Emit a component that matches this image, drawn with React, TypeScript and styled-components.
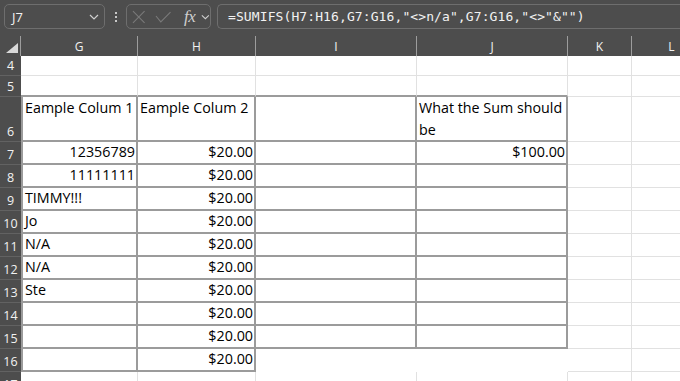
import React from 'react';
import styled, { createGlobalStyle } from 'styled-components';

type Edge = 'thick' | 'grid' | 'none';
type Align = 'left' | 'right';

type CellData = {
	text: string;
	align?: Align;
	top?: boolean;
};

const COLS = ['G', 'H', 'I', 'J', 'K', 'L'];
const COL_WIDTHS = [117, 118, 161, 151, 64, 80];
const ROWS = [4, 5, 6, 7, 8, 9, 10, 11, 12, 13, 14, 15, 16, 17];
const ROW_HEIGHTS: Record<number, number> = { 4: 20, 5: 21, 6: 45 };

const FORMULA = '=SUMIFS(H7:H16,G7:G16,"<>n/a",G7:G16,"<>"&"")';

const CELLS: Record<string, CellData> = {
	G6: { text: 'Eample Colum 1', top: true },
	H6: { text: 'Eample Colum 2', top: true },
	J6: { text: 'What the Sum should be', top: true },
	G7: { text: '12356789', align: 'right' },
	G8: { text: '11111111', align: 'right' },
	G9: { text: 'TIMMY!!!' },
	G10: { text: 'Jo' },
	G11: { text: 'N/A' },
	G12: { text: 'N/A' },
	G13: { text: 'Ste' },
	J7: { text: '$100.00', align: 'right' },
};

// money column
for (let r = 7; r <= 16; r++) {
	CELLS[`H${r}`] = { text: '$20.00', align: 'right' };
}

const colIndex = (c: string) => COLS.indexOf(c);

const isBordered = (r: number, c: number) => {
	const col = COLS[c];
	if ((col === 'G' || col === 'H') && r >= 6 && r <= 16) return true;
	if ((col === 'I' || col === 'J') && r >= 6 && r <= 15) return true;
	return false;
};

// white fill hides the gridlines round these cells
const isFilled = (r: number, c: number) => {
	const col = COLS[c];
	return (col === 'I' || col === 'J') && r === 16;
};

const rightEdge = (r: number, c: number): Edge => {
	if (isBordered(r, c) || isBordered(r, c + 1)) return 'thick';
	if (isFilled(r, c) || isFilled(r, c + 1)) return 'none';
	return 'grid';
};

const bottomEdge = (r: number, c: number): Edge => {
	if (isBordered(r, c) || isBordered(r + 1, c)) return 'thick';
	if (isFilled(r, c) || isFilled(r + 1, c)) return 'none';
	return 'grid';
};

const edgeCss = (edge: Edge) => {
	if (edge === 'thick') return '2px solid #9b9b9b';
	if (edge === 'grid') return '1px solid #e1e1e1';
	return '1px solid transparent';
};

const GlobalStyle = createGlobalStyle`
	html, body {
		margin: 0;
		padding: 0;
		background: #ffffff;
	}

	body {
		overflow: hidden;
	}
`;

const Window = styled.div`
	width: 680px;
	height: 381px;
	overflow: hidden;
	background: #ffffff;
	display: flex;
	flex-direction: column;
`;

const Toolbar = styled.div`
	height: 36px;
	flex: none;
	box-sizing: border-box;
	padding: 4px 0 0 4px;
	background: #4d4d4d;
	display: flex;
	align-items: flex-start;
`;

const Box = styled.div`
	height: 25px;
	box-sizing: border-box;
	border: 1px solid #6e6e6e;
	border-radius: 5px;
	display: flex;
	align-items: center;
`;

const NameBox = styled(Box)`
	width: 101px;
	justify-content: space-between;
	padding: 0 5px 0 7px;
	color: #f2f2f2;
	font: 13px 'Open Sans', sans-serif;
`;

const Dots = styled.div`
	height: 25px;
	margin-left: 10px;
	display: flex;
	flex-direction: column;
	justify-content: center;
	gap: 2px;

	span {
		width: 2px;
		height: 2px;
		background: #c8c8c8;
	}
`;

const FxGroup = styled(Box)`
	width: 85px;
	margin-left: 9px;
	padding-left: 5px;
	gap: 9px;
`;

const Fx = styled.span`
	margin-left: 4px;
	margin-right: -3px;
	font: italic 17px 'Liberation Serif', serif;
	color: #cfcfcf;
	line-height: 1;
	letter-spacing: -0.5px;
`;

const FormulaBox = styled(Box)`
	flex: 1;
	margin-left: 6px;
	padding-left: 10px;
	border-right: none;
	border-radius: 5px 0 0 5px;
	color: #f2f2f2;
	font: 13px 'DejaVu Sans Mono', monospace;
	letter-spacing: 0.1px;
	white-space: pre;
`;

const Sheet = styled.div`
	flex: 1;
	overflow: hidden;
	display: grid;
	grid-template-columns: 21px ${COL_WIDTHS.map((w) => `${w}px`).join(' ')};
	grid-template-rows: 20px ${ROWS.map((r) => `${ROW_HEIGHTS[r] || 23}px`).join(' ')};
`;

const ColHeader = styled.div`
	background: #4d4d4d;
	border-right: 1px solid #9d9d9d;
	color: #f2f2f2;
	font: 12px 'Open Sans', sans-serif;
	display: flex;
	align-items: center;
	justify-content: center;
`;

const Corner = styled(ColHeader)`
	align-items: flex-end;
	justify-content: flex-end;
	padding: 0 2px 3px 0;
`;

const RowHeader = styled.div`
	box-sizing: border-box;
	background: #4d4d4d;
	border-bottom: 1px solid #626262;
	color: #f2f2f2;
	font: 12.5px 'Open Sans', sans-serif;
	line-height: 16px;
	display: flex;
	align-items: flex-end;
	justify-content: center;
	padding-bottom: 1px;
`;

const Cell = styled.div<{ $right: Edge; $bottom: Edge; $left?: boolean; $align: Align; $top: boolean }>`
	box-sizing: border-box;
	min-width: 0;
	overflow: hidden;
	border-right: ${(p) => edgeCss(p.$right)};
	border-bottom: ${(p) => edgeCss(p.$bottom)};
	border-left: ${(p) => (p.$left ? edgeCss('thick') : 'none')};
	padding: 0 1px 0 2px;
	display: flex;
	flex-direction: column;
	justify-content: ${(p) => (p.$top ? 'flex-start' : 'flex-end')};
	text-align: ${(p) => p.$align};
	color: #000000;
	font: 14.3px 'Open Sans', sans-serif;
	line-height: 22px;
	white-space: ${(p) => (p.$top ? 'normal' : 'nowrap')};
`;

const Chevron = ({ width = 10 }: { width?: number }) => (
	<svg width={width} height="6" viewBox="0 0 10 6">
		<polyline points="1,1 5,5 9,1" fill="none" stroke="#cfcfcf" strokeWidth="1.2" />
	</svg>
);

const CancelIcon = () => (
	<svg width="14" height="14" viewBox="0 0 14 14">
		<path d="M1 1 L13 13 M13 1 L1 13" stroke="#7a7a7a" strokeWidth="1.1" />
	</svg>
);

const EnterIcon = () => (
	<svg width="17" height="12" viewBox="0 0 17 12">
		<polyline points="1,5 6,11 16,1" fill="none" stroke="#7a7a7a" strokeWidth="1.1" />
	</svg>
);

const SelectAll = () => (
	<svg width="12" height="10" viewBox="0 0 12 10">
		<polygon points="0,10 12,10 12,0" fill="#d9d9d9" />
	</svg>
);

const App = () => {
	return (
		<>
			<GlobalStyle />
			<Window>
				<Toolbar>
					<NameBox>
						<span>J7</span>
						<Chevron />
					</NameBox>
					<Dots>
						<span />
						<span />
						<span />
					</Dots>
					<FxGroup>
						<CancelIcon />
						<EnterIcon />
						<Fx>fx</Fx>
						<Chevron width={9} />
					</FxGroup>
					<FormulaBox>{FORMULA}</FormulaBox>
				</Toolbar>
				<Sheet>
					<Corner>
						<SelectAll />
					</Corner>
					{COLS.map((c) => (
						<ColHeader key={c}>{c}</ColHeader>
					))}
					{ROWS.map((r) => (
						<React.Fragment key={r}>
							<RowHeader>{r}</RowHeader>
							{COLS.map((c) => {
								const ci = colIndex(c);
								const data = CELLS[`${c}${r}`];
								return (
									<Cell
										key={c}
										$right={rightEdge(r, ci)}
										$bottom={bottomEdge(r, ci)}
										$left={c === 'G' && isBordered(r, ci)}
										$align={data?.align || 'left'}
										$top={!!data?.top}
									>
										{data?.text}
									</Cell>
								);
							})}
						</React.Fragment>
					))}
				</Sheet>
			</Window>
		</>
	);
};

export default App;
